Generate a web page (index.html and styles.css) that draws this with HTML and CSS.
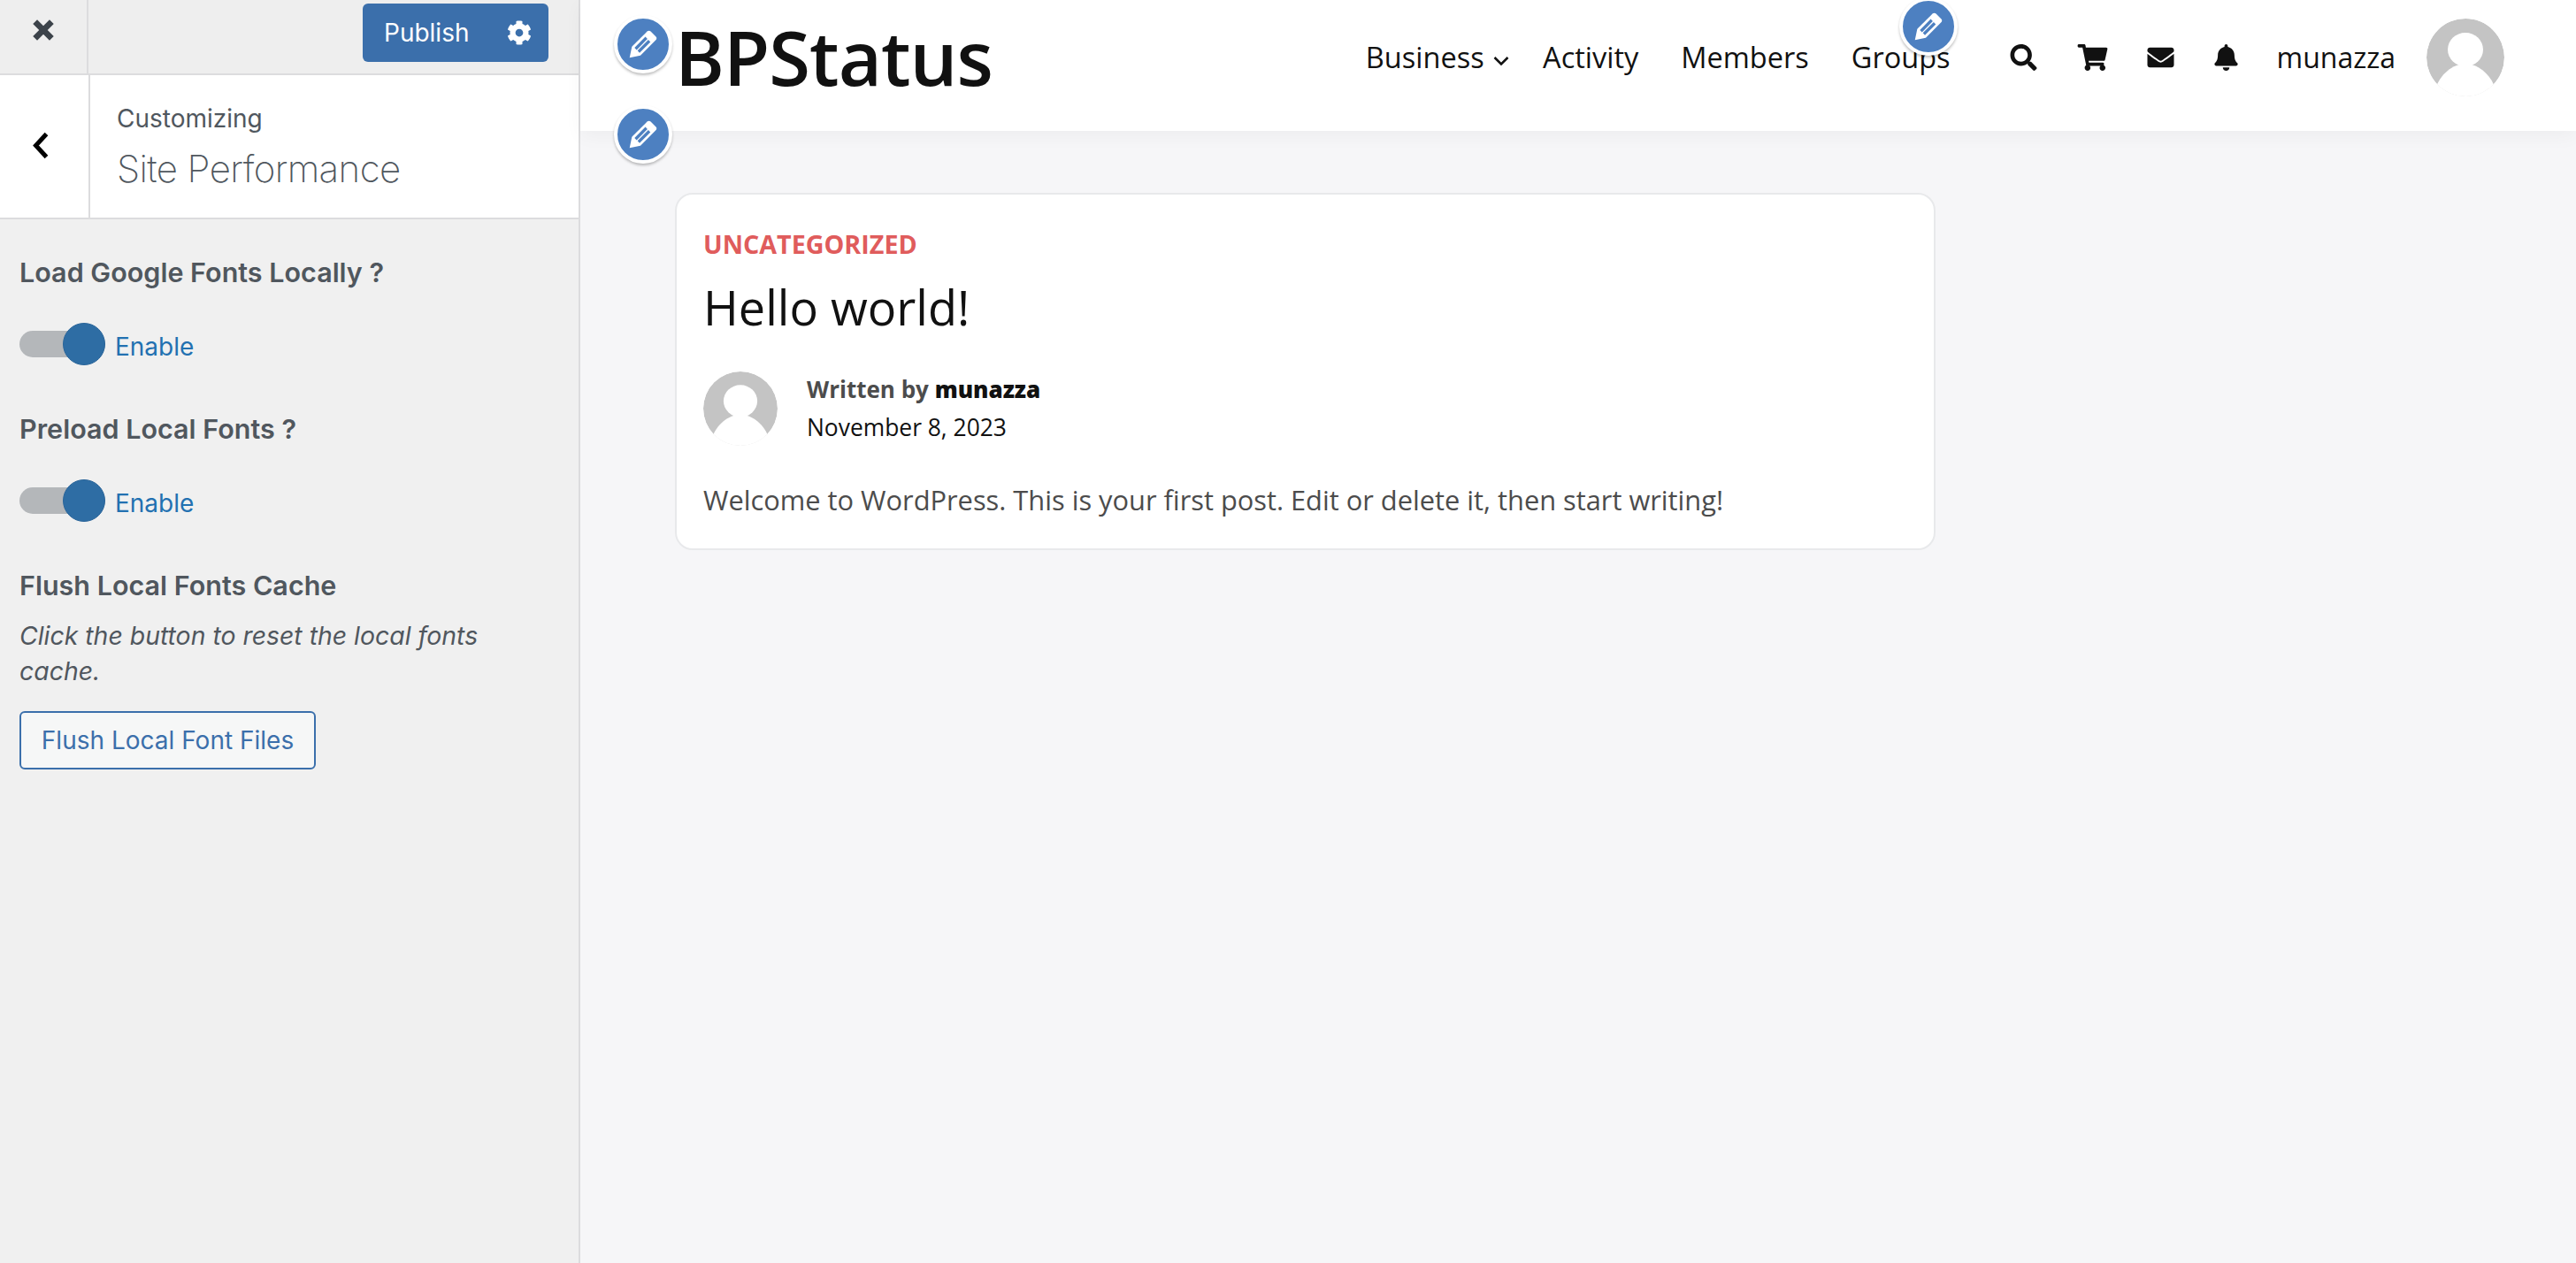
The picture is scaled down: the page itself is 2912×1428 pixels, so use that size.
FILE: index.html
```html
<!DOCTYPE html>
<html lang="en">
<head>
  <meta charset="UTF-8">
  <title>Customizing Site Performance</title>
  <link rel="stylesheet" href="styles.css">
</head>
<body>

<!-- CUSTOMIZER PANEL -->
<aside class="panel">
  <div class="panel-top">
    <a class="close-btn" href="#">
      <svg viewBox="0 0 25 25" class="close-icon"><path d="M3.5 3.5l18 18M21.5 3.5l-18 18"/></svg>
    </a>
    <div class="publish">
      <span>Publish</span>
      <svg viewBox="0 0 512 512" class="cog"><path d="M487.4 315.7l-42.6-24.6c4.3-23.2 4.3-47 0-70.2l42.6-24.6c4.9-2.8 7.1-8.6 5.5-14-11.1-35.6-30-67.8-54.7-94.6-3.8-4.1-10-5.1-14.8-2.3L380.8 110c-17.9-15.4-38.5-27.3-60.8-35.1V25.8c0-5.6-3.9-10.5-9.4-11.7-36.7-8.2-74.3-7.8-109.2 0-5.5 1.2-9.4 6.1-9.4 11.7V75c-22.2 7.9-42.8 19.8-60.8 35.1L88.7 85.5c-4.9-2.8-11-1.9-14.8 2.3-24.7 26.7-43.6 58.9-54.7 94.6-1.7 5.4.6 11.2 5.5 14L67.3 221c-4.3 23.2-4.3 47 0 70.2l-42.6 24.6c-4.9 2.8-7.1 8.6-5.5 14 11.1 35.6 30 67.8 54.7 94.6 3.8 4.1 10 5.1 14.8 2.3l42.6-24.6c17.9 15.4 38.5 27.3 60.8 35.1v49.2c0 5.6 3.9 10.5 9.4 11.7 36.7 8.2 74.3 7.8 109.2 0 5.5-1.2 9.4-6.1 9.4-11.7v-49.2c22.2-7.9 42.8-19.8 60.8-35.1l42.6 24.6c4.9 2.8 11 1.9 14.8-2.3 24.7-26.7 43.6-58.9 54.7-94.6 1.5-5.5-.7-11.3-5.6-14.1zM256 336c-44.1 0-80-35.9-80-80s35.9-80 80-80 80 35.9 80 80-35.9 80-80 80z"/></svg>
    </div>
  </div>

  <div class="panel-head">
    <a class="back-btn" href="#">
      <svg viewBox="0 0 18 31" class="back-icon"><path d="M15.5 2.5L3.5 15.5l12 13"/></svg>
    </a>
    <div class="panel-title">
      <span class="crumb">Customizing</span>
      <h2>Site Performance</h2>
    </div>
  </div>

  <div class="controls">
    <section class="control">
      <h3>Load Google Fonts Locally ?</h3>
      <label class="toggle-row"><span class="toggle"><span class="knob"></span></span><span class="toggle-label">Enable</span></label>
    </section>
    <section class="control">
      <h3>Preload Local Fonts ?</h3>
      <label class="toggle-row"><span class="toggle"><span class="knob"></span></span><span class="toggle-label">Enable</span></label>
    </section>
    <section class="control">
      <h3>Flush Local Fonts Cache</h3>
      <p class="desc">Click the button to reset the local fonts cache.</p>
      <button class="flush-btn">Flush Local Font Files</button>
    </section>
  </div>
</aside>

<!-- SITE PREVIEW -->
<main class="preview">
  <header class="site-header">
    <a class="brand" href="#">BPStatus</a>
    <nav class="nav">
      <a href="#" class="nav-business">Business <svg viewBox="0 0 18 12" class="chevron"><path d="M1.5 2L9 9.500 16.500 2"/></svg></a>
      <a href="#">Activity</a>
      <a href="#">Members</a>
      <a href="#">Groups</a>
    </nav>
    <div class="tools">
      <svg viewBox="0 0 512 512" class="tool tool-search"><path d="M505 442.700L405.300 343c-4.500-4.500-10.600-7-17-7H372c27.600-35.300 44-79.700 44-128C416 93.100 322.900 0 208 0S0 93.100 0 208s93.100 208 208 208c48.300 0 92.700-16.400 128-44v16.300c0 6.400 2.500 12.500 7 17l99.700 99.700c9.400 9.400 24.600 9.400 33.900 0l28.300-28.300c9.400-9.400 9.400-24.600.1-34zM208 336c-70.700 0-128-57.200-128-128 0-70.700 57.200-128 128-128 70.700 0 128 57.200 128 128 0 70.700-57.200 128-128 128z"/></svg>
      <svg viewBox="0 0 576 512" class="tool tool-cart"><path d="M528.120 301.319l47.273-208C578.806 78.301 567.391 64 551.990 64H159.208l-9.166-44.810C147.758 8.021 137.930 0 126.529 0H24C10.745 0 0 10.745 0 24v16c0 13.255 10.745 24 24 24h69.883l70.248 343.435C147.325 417.100 136 435.222 136 456c0 30.928 25.072 56 56 56s56-25.072 56-56c0-15.674-6.447-29.835-16.824-40h209.647C430.447 426.165 424 440.326 424 456c0 30.928 25.072 56 56 56s56-25.072 56-56c0-22.172-12.888-41.332-31.579-50.405l5.517-24.276c3.413-15.018-8.002-29.319-23.403-29.319H218.117l-6.545-32h293.145c11.206 0 20.920-7.754 23.403-18.681z"/></svg>
      <svg viewBox="0 0 512 512" class="tool tool-mail"><path d="M502.300 190.800c3.900-3.100 9.700-.2 9.700 4.700V400c0 26.500-21.500 48-48 48H48c-26.500 0-48-21.500-48-48V195.600c0-5 5.700-7.800 9.700-4.700 22.400 17.400 52.100 39.500 154.100 113.600 21.100 15.400 56.700 47.800 92.200 47.600 35.700.3 72-32.800 92.300-47.600 102-74.100 131.600-96.300 154-113.700zM256 320c23.200.4 56.600-29.200 73.400-41.400 132.700-96.300 142.800-104.700 173.400-128.700 5.800-4.500 9.200-11.500 9.200-18.900v-19c0-26.500-21.500-48-48-48H48C21.500 64 0 85.500 0 112v19c0 7.400 3.400 14.300 9.200 18.900 30.600 23.900 40.700 32.400 173.400 128.700 16.800 12.200 50.200 41.800 73.400 41.400z"/></svg>
      <svg viewBox="0 0 448 512" class="tool tool-bell"><path d="M224 512c35.320 0 63.970-28.650 63.970-64H160.030c0 35.350 28.650 64 63.970 64zm215.390-149.710c-19.320-20.760-55.470-51.990-55.470-154.290 0-77.700-54.480-139.900-127.940-155.160V32c0-17.670-14.320-32-31.980-32s-31.980 14.330-31.980 32v20.840C118.560 68.100 64.080 130.300 64.080 208c0 102.300-36.150 133.530-55.470 154.290-6 6.450-8.660 14.160-8.610 21.710.11 16.400 12.980 32 32.100 32h383.800c19.120 0 32-15.600 32.100-32 .05-7.550-2.610-15.270-8.610-21.710z"/></svg>
      <span class="user-name">munazza</span>
      <svg viewBox="0 0 88 88" class="avatar avatar-big"><circle cx="44" cy="44" r="44" fill="#c4c4c4"/><ellipse cx="44" cy="35" rx="20" ry="19" fill="#fff"/><path d="M10 88V80C15 63 30 51 44 51s29 12 34 29v8z" fill="#fff"/></svg>
    </div>
  </header>

  <article class="post">
    <a class="post-cat" href="#">UNCATEGORIZED</a>
    <h1>Hello world!</h1>
    <div class="post-meta">
      <svg viewBox="0 0 88 88" class="avatar avatar-small"><circle cx="44" cy="44" r="44" fill="#c4c4c4"/><ellipse cx="44" cy="35" rx="20" ry="19" fill="#fff"/><path d="M10 88V80C15 63 30 51 44 51s29 12 34 29v8z" fill="#fff"/></svg>
      <div class="meta-text">
        <div class="meta-by">Written by <b>munazza</b></div>
        <div class="meta-date">November 8, 2023</div>
      </div>
    </div>
    <p class="post-text">Welcome to WordPress. This is your first post. Edit or delete it, then start writing!</p>
  </article>

  <!-- edit shortcuts sit over the preview -->
  <a class="shortcut shortcut-logo" href="#"><svg viewBox="0 0 20 20"><path d="M13.890 3.390l2.710 2.720c.46.46.42 1.240.03 1.640l-8.010 8.020-5.560 1.160 1.160-5.580s7.600-7.630 7.990-8.030c.39-.39 1.220-.39 1.680.07zm-2.730 2.790l-5.590 5.610 1.110 1.110 5.540-5.650zm-2.970 8.230l5.580-5.600-1.070-1.080-5.590 5.600z"/></svg></a>
  <a class="shortcut shortcut-tag" href="#"><svg viewBox="0 0 20 20"><path d="M13.890 3.390l2.710 2.720c.46.46.42 1.240.03 1.640l-8.010 8.020-5.560 1.160 1.160-5.580s7.600-7.630 7.990-8.030c.39-.39 1.220-.39 1.680.07zm-2.730 2.790l-5.590 5.610 1.110 1.110 5.540-5.650zm-2.970 8.230l5.580-5.600-1.070-1.080-5.590 5.600z"/></svg></a>
  <a class="shortcut shortcut-menu" href="#"><svg viewBox="0 0 20 20"><path d="M13.890 3.390l2.710 2.720c.46.46.42 1.240.03 1.640l-8.010 8.020-5.560 1.160 1.160-5.580s7.600-7.630 7.990-8.030c.39-.39 1.220-.39 1.680.07zm-2.730 2.790l-5.590 5.610 1.110 1.110 5.540-5.650zm-2.970 8.230l5.580-5.600-1.070-1.080-5.590 5.600z"/></svg></a>
</main>

</body>
</html>
```

FILE: styles.css
```css
* {
  margin: 0;
  padding: 0;
  box-sizing: border-box;
}
body {
  display: flex;
  height: 100vh;
  overflow: hidden;
  background-color: #f6f6f8;
}
a {
  text-decoration: none;
  color: inherit;
}

/* Customizer panel */
.panel {
  width: 656px;
  flex-shrink: 0;
  display: flex;
  flex-direction: column;
  background: #f0f0f0;
  border-right: 2px solid #dcdcde;
  font-family: Inter, "Liberation Sans", sans-serif;
  color: #50575e;
}
.panel-top {
  height: 85px;
  flex-shrink: 0;
  display: flex;
  align-items: flex-start;
  justify-content: space-between;
  padding-right: 34px;
  border-bottom: 2px solid #dcdcde;
  background: #eeeeee;
}
.close-btn {
  width: 100px;
  height: 83px;
  display: flex;
  align-items: center;
  justify-content: center;
  border-right: 2px solid #dcdcde;
  padding-bottom: 16px;
}
.close-icon {
  width: 26px;
  height: 26px;
  fill: none;
  stroke: #3c434a;
  stroke-width: 6.5;
}
.publish {
  margin-top: 4px;
  width: 210px;
  height: 66px;
  display: flex;
  align-items: center;
  justify-content: space-between;
  padding: 0 19px 0 24px;
  background: #3b6fab;
  border-radius: 6px;
  color: #fff;
  font-size: 28px;
}
.cog {
  width: 28px;
  height: 28px;
  fill: #fff;
}
.panel-head {
  height: 163px;
  flex-shrink: 0;
  display: flex;
  background: #fff;
  border-bottom: 2px solid #dcdcde;
}
.back-btn {
  width: 102px;
  flex-shrink: 0;
  display: flex;
  align-items: center;
  justify-content: center;
  border-right: 2px solid #dcdcde;
  padding-right: 8px;
  padding-bottom: 2px;
}
.back-icon {
  width: 18px;
  height: 31px;
  fill: none;
  stroke: #000;
  stroke-width: 5;
}
.panel-title {
  padding: 32px 0 0 30px;
}
.crumb {
  display: block;
  font-size: 28px;
  line-height: 34px;
}
.panel-title h2 {
  margin-top: 14px;
  font-size: 42px;
  line-height: 52px;
  font-weight: 200;
  letter-spacing: -0.6px;
}
.controls {
  padding: 42px 30px 0 22px;
}
.control {
  margin-bottom: 54px;
}
.control h3 {
  font-size: 30.5px;
  line-height: 36px;
  font-weight: 600;
}
.toggle-row {
  display: flex;
  align-items: center;
  margin-top: 39px;
  height: 48px;
}
.toggle {
  width: 97px;
  height: 30px;
  background: #b4b7ba;
  border-radius: 15px;
  position: relative;
}
.knob {
  position: absolute;
  right: 0;
  top: -9px;
  width: 48px;
  height: 48px;
  border-radius: 50%;
  background: #2e6da4;
  border: 1px solid #2a659a;
}
.toggle-label {
  margin-left: 11px;
  margin-top: 5px;
  font-size: 28px;
  color: #2271b1;
}
.desc {
  margin-top: 19px;
  font-size: 28.4px;
  line-height: 40px;
  font-style: italic;
}
.flush-btn {
  display: block;
  margin-top: 25px;
  width: 335px;
  height: 66px;
  background: #f6f7f7;
  border: 2px solid #3b6fab;
  border-radius: 6px;
  color: #3b6fab;
  font-family: inherit;
  font-size: 28px;
}

/* Site preview */
.preview {
  flex: 1;
  position: relative;
  font-family: "Open Sans", "Liberation Sans", sans-serif;
  color: #111;
}
.site-header {
  height: 148px;
  display: flex;
  align-items: center;
  padding: 0 81px 19px 107px;
  background: #fff;
  box-shadow: 0 6px 20px rgba(0, 0, 0, 0.04);
}
.brand {
  font-size: 85px;
  font-weight: 600;
  line-height: 1;
  letter-spacing: -1px;
}
.nav {
  margin-left: auto;
  display: flex;
  align-items: center;
  gap: 48px;
  font-size: 32.5px;
  font-weight: 500;
}
.nav-business {
  margin-right: -10px;
}
.chevron {
  width: 18px;
  height: 12px;
  margin-left: 2px;
  vertical-align: 2px;
  fill: none;
  stroke: #111;
  stroke-width: 2.5;
}
.tools {
  display: flex;
  align-items: center;
  margin-left: 67px;
}
.tool {
  fill: #111;
  height: 30px;
}
.tool-search { width: 31px; }
.tool-cart { width: 35px; margin-left: 45px; }
.tool-mail { width: 31px; margin-left: 44px; }
.tool-bell { width: 27px; margin-left: 45px; }
.user-name {
  margin-left: 44px;
  font-size: 32px;
  font-weight: 500;
}
.avatar {
  border-radius: 50%;
  flex-shrink: 0;
}
.avatar-big {
  width: 88px;
  height: 88px;
  margin-left: 35px;
}
.avatar-small {
  width: 84px;
  height: 84px;
}

.post {
  width: 1425px;
  height: 404px;
  margin: 70px 0 0 107px;
  padding: 36px 30px 0;
  background: #fff;
  border: 2px solid #e8e9eb;
  border-radius: 20px;
}
.post-cat {
  display: block;
  color: #e05c5c;
  font-size: 28.7px;
  line-height: 40px;
  font-weight: 700;
}
.post h1 {
  margin-top: 16px;
  font-size: 54px;
  line-height: 70px;
  font-weight: 500;
}
.post-meta {
  display: flex;
  align-items: center;
  gap: 33px;
  margin-top: 37px;
}
.meta-by {
  color: #4c4c4c;
  font-size: 26px;
  line-height: 42px;
  font-weight: 700;
}
.meta-by b {
  color: #111;
}
.meta-date {
  font-size: 26.4px;
  line-height: 42px;
  margin-top: 1px;
}
.post-text {
  margin-top: 38px;
  font-size: 30.8px;
  line-height: 46px;
  color: #4c4c4c;
}

/* Edit shortcuts */
.shortcut {
  position: absolute;
  width: 66px;
  height: 66px;
  display: flex;
  align-items: center;
  justify-content: center;
  background: #4d80c1;
  border: 4px solid #fff;
  border-radius: 50%;
  box-shadow: 0 2px 3px rgba(0, 0, 0, 0.25);
}
.shortcut svg {
  width: 44px;
  height: 44px;
  fill: #fff;
}
.shortcut-logo { left: 38px; top: 17px; }
.shortcut-tag { left: 38px; top: 119px; }
.shortcut-menu { left: 1491px; top: -3px; }
```
